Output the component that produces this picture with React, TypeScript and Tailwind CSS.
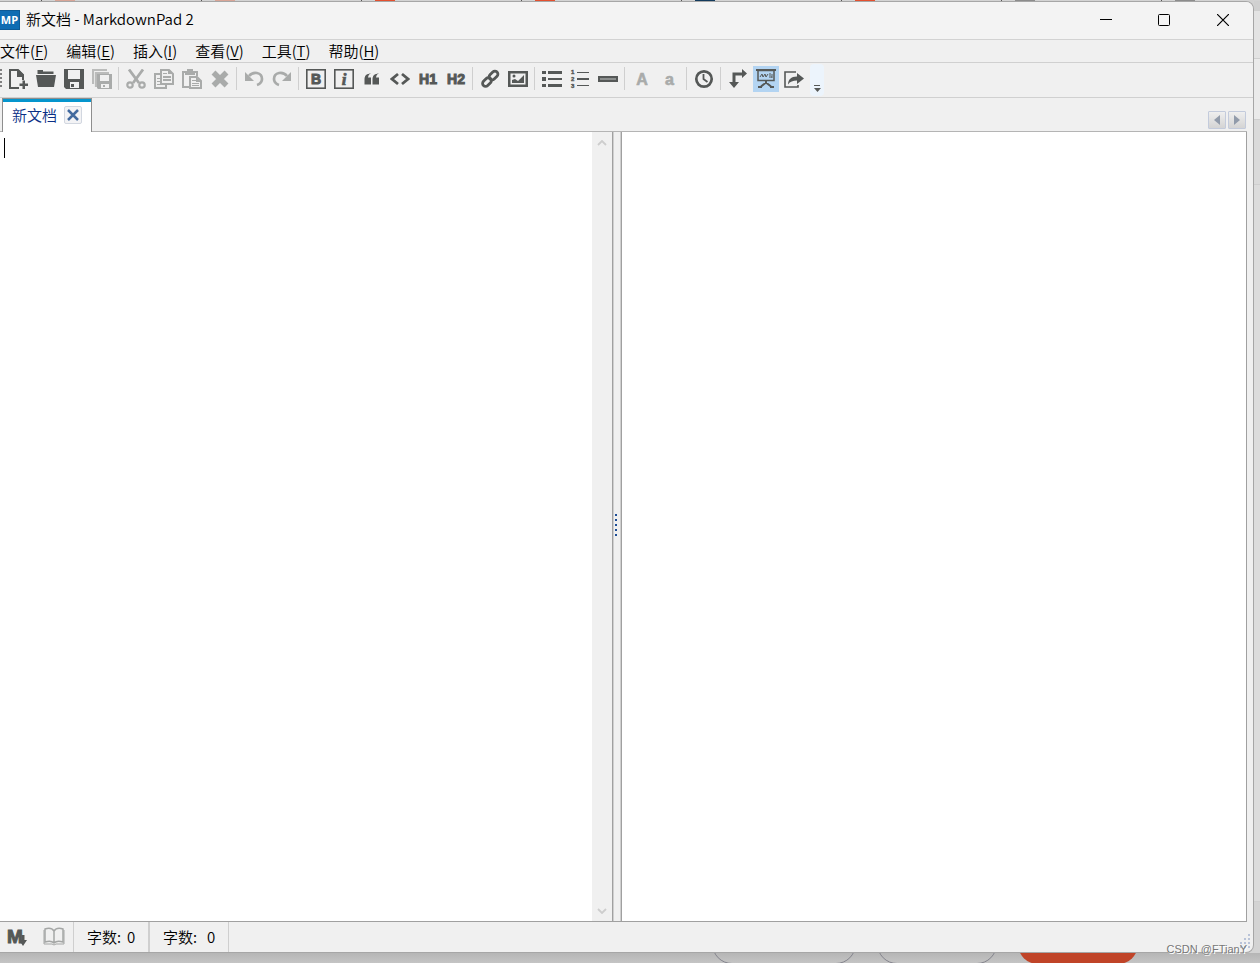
import { useState, type ReactNode } from 'react'
import { clsx } from 'clsx'

type Tool = {
  label: string
  icon: ReactNode
  disabled?: boolean
  active?: boolean
}

const Glyph = ({ children }: { children: ReactNode }) => (
  <svg width="20" height="20" viewBox="0 0 20 20" fill="currentColor" aria-hidden="true">
    {children}
  </svg>
)

const letter = { fontFamily: 'Liberation Sans', fontWeight: 700 }

// Toolbar groups, a separator is drawn between two groups
const groups: Tool[][] = [
  [
    {
      label: '新建',
      icon: (
        <Glyph>
          <path d="M11 19H2V1h8l5 5v5" fill="none" stroke="currentColor" strokeWidth="2" />
          <path d="M9 1h2l5 5v2H9z" />
          <path d="M14.500 11.500h2.500v3h3v2.500h-3v3h-2.500v-3h-3v-2.500h3z" />
        </Glyph>
      ),
    },
    {
      label: '打开',
      icon: (
        <Glyph>
          <path d="M1.500 1h5.500v1.500h10.500v2.500h-16zM0 6h20l-2 12H2z" />
        </Glyph>
      ),
    },
    {
      label: '保存',
      icon: (
        <Glyph>
          <path fillRule="evenodd" d="M0 0h20v20H2l-2-2zM4 1v9h12V1zM6 13v6h9v-6zM7 15h3v3H7z" />
        </Glyph>
      ),
    },
    {
      label: '全部保存',
      disabled: true,
      icon: (
        <Glyph>
          <path d="M1 15V1h14M4 18V4h13" fill="none" stroke="currentColor" strokeWidth="2.200" opacity="0.75" />
          <path fillRule="evenodd" d="M5 5h15v15H6l-1-1zM8 6v6h9V6zM9 15v4h8v-4zM11 16h2v2h-2z" />
        </Glyph>
      ),
    },
  ],
  [
    {
      label: '剪切',
      disabled: true,
      icon: (
        <Glyph>
          <g fill="none" stroke="currentColor">
            <path d="M3 0.500l10 13.500M17 0.500L7 14" strokeWidth="2.800" />
            <circle cx="4" cy="16" r="2.700" strokeWidth="2.200" />
            <circle cx="16" cy="16" r="2.700" strokeWidth="2.200" />
          </g>
        </Glyph>
      ),
    },
    {
      label: '复制',
      disabled: true,
      icon: (
        <Glyph>
          <g fill="none" stroke="currentColor" strokeWidth="2">
            <path d="M7 5H1v14h11v-4" />
            <path d="M7 1h8l4 4v10H7z" />
          </g>
          <path d="M9 4h4v1H9zM9 7h8v2H9zM9 10h8v2H9zM3 9h3v1H3zM3 12h3v1H3zM3 15h7v1H3zM14 1h2l3 4h-5z" />
        </Glyph>
      ),
    },
    {
      label: '粘贴',
      disabled: true,
      icon: (
        <Glyph>
          <path d="M8 18H1V3h14v4" fill="none" stroke="currentColor" strokeWidth="2" />
          <path d="M5 0h6v2h2v4H3V2h2z" />
          <path d="M8 8h7l4 4v7H8z" fill="#f0f0f0" stroke="currentColor" strokeWidth="2" />
          <path d="M10 11h4v1h-4zM10 14h7v1h-7zM10 16h7v1h-7zM14 8l5 5h-5z" />
        </Glyph>
      ),
    },
    {
      label: '删除',
      disabled: true,
      icon: (
        <Glyph>
          <path d="M3.500 3.500l13 13M16.500 3.500l-13 13" fill="none" stroke="currentColor" strokeWidth="5.500" />
        </Glyph>
      ),
    },
  ],
  [
    {
      label: '撤销',
      disabled: true,
      icon: (
        <Glyph>
          <path d="M5 7c4-5 13-4 13 3 0 3-2 5-5 6" fill="none" stroke="currentColor" strokeWidth="2.700" />
          <path d="M1 3v9h9z" />
        </Glyph>
      ),
    },
    {
      label: '重做',
      disabled: true,
      icon: (
        <Glyph>
          <path d="M15 7C11 2 2 3 2 10c0 3 2 5 5 6" fill="none" stroke="currentColor" strokeWidth="2.700" />
          <path d="M19 3v9h-9z" />
        </Glyph>
      ),
    },
  ],
  [
    {
      label: '粗体',
      icon: (
        <Glyph>
          <rect x="0.800" y="0.800" width="18.400" height="18.400" fill="none" stroke="currentColor" strokeWidth="1.600" />
          <text x="10" y="15" textAnchor="middle" fontSize="14" stroke="currentColor" style={letter}>B</text>
        </Glyph>
      ),
    },
    {
      label: '斜体',
      icon: (
        <Glyph>
          <rect x="0.800" y="0.800" width="18.400" height="18.400" fill="none" stroke="currentColor" strokeWidth="1.600" />
          <text x="10" y="15.500" textAnchor="middle" fontSize="17" fontFamily="Liberation Serif" fontWeight="700" fontStyle="italic" stroke="currentColor" strokeWidth="0.700">i</text>
        </Glyph>
      ),
    },
    {
      label: '引用',
      icon: (
        <Glyph>
          <path d="M9.500 4.500c-2 0-3 1.500-3.500 4h3v7H2.500v-5c0-4 2-6 7-6zM17.500 4.500c-2 0-3 1.500-3.500 4h3v7h-6.500v-5c0-4 2-6 7-6z" />
        </Glyph>
      ),
    },
    {
      label: '代码',
      icon: (
        <Glyph>
          <path d="M8 5l-6 5 6 5M12 5l6 5-6 5" fill="none" stroke="currentColor" strokeWidth="2.800" />
        </Glyph>
      ),
    },
    {
      label: '标题 1',
      icon: (
        <Glyph>
          <text x="10" y="15" textAnchor="middle" fontSize="14" stroke="currentColor" style={letter}>H1</text>
        </Glyph>
      ),
    },
    {
      label: '标题 2',
      icon: (
        <Glyph>
          <text x="10" y="15" textAnchor="middle" fontSize="14" stroke="currentColor" style={letter}>H2</text>
        </Glyph>
      ),
    },
  ],
  [
    {
      label: '链接',
      icon: (
        <Glyph>
          <g fill="none" stroke="currentColor" strokeWidth="2.800">
            <rect x="-5" y="-3" width="10" height="6" rx="3" transform="translate(13.5 6.5) rotate(-45)" />
            <rect x="-5" y="-3" width="10" height="6" rx="3" transform="translate(7 13) rotate(-45)" />
          </g>
        </Glyph>
      ),
    },
    {
      label: '图片',
      icon: (
        <Glyph>
          <path fillRule="evenodd" d="M0 2h20v16H0zM2.500 4.500v11h15v-11z" />
          <circle cx="6" cy="7" r="1.500" />
          <path d="M4 14v-3l3-1 3 2 6-6v8z" />
        </Glyph>
      ),
    },
  ],
  [
    {
      label: '无序列表',
      icon: (
        <Glyph>
          <path d="M0 2h4v3H0zM6 2h14v3H6zM0 8h4v4H0zM6 9h14v2H6zM0 15h4v3H0zM6 15h14v3H6z" />
        </Glyph>
      ),
    },
    {
      label: '有序列表',
      icon: (
        <Glyph>
          <path d="M7 3h12v1H7zM7 9h12v2H7zM7 16h12v1H7z" />
          <g fontSize="6" stroke="currentColor" strokeWidth="0.400" style={letter}>
            <text x="1" y="5">1</text>
            <text x="1" y="12">2</text>
            <text x="1" y="19">3</text>
          </g>
        </Glyph>
      ),
    },
    {
      label: '水平线',
      icon: (
        <Glyph>
          <path d="M0 7h20v6H0z" />
          <path d="M2 9h16v2H2z" fill="#8c8f8e" />
        </Glyph>
      ),
    },
  ],
  [
    {
      label: '大写',
      disabled: true,
      icon: (
        <Glyph>
          <text x="10" y="16" textAnchor="middle" fontSize="16" stroke="currentColor" strokeWidth="0.600" style={letter}>A</text>
        </Glyph>
      ),
    },
    {
      label: '小写',
      disabled: true,
      icon: (
        <Glyph>
          <text x="9.500" y="16" textAnchor="middle" fontSize="16" stroke="currentColor" strokeWidth="0.600" style={letter}>a</text>
        </Glyph>
      ),
    },
  ],
  [
    {
      label: '时间戳',
      icon: (
        <Glyph>
          <g fill="none" stroke="currentColor">
            <circle cx="10" cy="10" r="7.700" strokeWidth="2.700" />
            <path d="M9.500 5v5l4 3" strokeWidth="1.800" />
          </g>
        </Glyph>
      ),
    },
  ],
  [
    {
      label: '水平布局',
      icon: (
        <Glyph>
          <path d="M6 13V5h8" fill="none" stroke="currentColor" strokeWidth="3" />
          <path d="M1 13h10l-5 6zM14 0v9l5-4.500z" />
        </Glyph>
      ),
    },
    {
      label: '实时预览',
      active: true,
      icon: (
        <Glyph>
          <g fill="none" stroke="currentColor">
            <rect x="2" y="1.500" width="16" height="10" strokeWidth="1.500" />
            <path d="M4 8l2-3 1 3 2-3 1 3 2-3M13 8h3M14 4v3M16 5v4" />
            <path d="M10 11v4M10 13.500l-5 4M10 13.500l5 4M2 18h4M14 18h4" strokeWidth="2" />
          </g>
          <path d="M0 0h20v2H0z" />
        </Glyph>
      ),
    },
    {
      label: '导出',
      icon: (
        <Glyph>
          <path d="M12 3H1v15h13v-2" fill="none" stroke="currentColor" strokeWidth="1.600" />
          <path d="M13 4l7 5.500-7 5.500v-3.500c-4 0-7 1-9 4 0-5 3-8 9-8z" />
        </Glyph>
      ),
    },
  ],
]

const menus = [
  ['文件', 'F'],
  ['编辑', 'E'],
  ['插入', 'I'],
  ['查看', 'V'],
  ['工具', 'T'],
  ['帮助', 'H'],
]

const tabColors = ['bg-[#d9a596]', 'bg-[#d9a596]', 'bg-[#e4502f]', 'bg-[#e4502f]', 'bg-[#123a5c]', 'bg-[#e4502f]', 'bg-[#8c8c8c]', 'bg-[#8c8c8c]']

function TitleBar() {
  return (
    <header className="flex h-[38px] shrink-0 items-center border-b border-[#d2d2d2] bg-[#f3f3f3] pb-[2px]">
      <span className="flex size-5 items-center justify-center border border-l-0 border-[#0d5a96] bg-[#0f6cb3] font-['Open_Sans',sans-serif] text-[11px] font-bold leading-4 text-white">MP</span>
      <h1 className="ml-[6px] flex-1 pb-px text-[15px] leading-5">新文档 - MarkdownPad 2</h1>
      <div className="flex">
        <button aria-label="最小化" className="flex h-9 w-[58px] items-center justify-center">
          <svg width="12" height="12" viewBox="0 0 12 12" stroke="#000"><path d="M0 5.500h12" /></svg>
        </button>
        <button aria-label="最大化" className="flex h-9 w-[58px] items-center justify-center">
          <svg width="12" height="12" viewBox="0 0 12 12" fill="none" stroke="#000"><rect x="0.500" y="0.500" width="11" height="11" rx="1" /></svg>
        </button>
        <button aria-label="关闭" className="flex h-9 w-[60px] items-center justify-center">
          <svg width="12" height="12" viewBox="0 0 12 12" stroke="#000" strokeWidth="1.200"><path d="M0 0l12 12M12 0L0 12" /></svg>
        </button>
      </div>
    </header>
  )
}

function ToolBar() {
  return (
    <div role="toolbar" className="flex h-[35px] shrink-0 items-start overflow-hidden border-b border-[#d0d0d0]">
      <div className="mr-[1px] mt-1 flex w-[3px] flex-col gap-[2px] pt-[2px]">
        {[0, 1, 2, 3, 4].map((i) => (
          <span key={i} className="h-[2px] w-[2px] bg-[#808080]" />
        ))}
      </div>
      {groups.map((group, gi) => (
        <div key={gi} className="flex">
          {gi > 0 && <span className="ml-[2px] mr-[3px] mt-1 h-[23px] w-px bg-[#cfcfcf]" />}
          {group.map((tool) => (
            <button
              key={tool.label}
              aria-label={tool.label}
              disabled={tool.disabled}
              className={clsx(
                'mt-[2px] flex size-7 items-center justify-center border border-[#f0f0f0]',
                tool.disabled ? 'text-[#a9abaa]' : 'text-[#555857]',
                tool.active && 'bg-[#b3d4f2]'
              )}
            >
              {tool.icon}
            </button>
          ))}
        </div>
      ))}
      <button aria-label="更多" className="ml-[2px] mt-[1px] flex h-8 w-[14px] items-end justify-center rounded-sm bg-[#ecf4fc] pb-[3px]">
        <svg width="8" height="8" viewBox="0 0 8 8" fill="#555857"><path d="M1 0h6v1H1zM1 3h7L4.500 7z" /></svg>
      </button>
    </div>
  )
}

function TabStrip() {
  const arrow = 'flex size-[18px] items-center justify-center rounded-[1px] border border-[#c3cbdc] bg-linear-to-b from-[#efefef] to-[#d4d4d4]'
  return (
    <div className="flex h-[34px] shrink-0 items-end">
      <div className="h-full w-[2px] border-b border-[#b4b4b4]" />
      <div className="flex h-full w-[90px] items-center gap-[7px] border-x border-t border-[#8e8e8e] bg-white pb-[2px] pl-[9px] shadow-[inset_0_3px_0_#0595cd]">
        <button className="text-[15px] leading-5 text-[#0a2f85]">新文档</button>
        <button aria-label="关闭标签" className="flex size-[18px] items-center justify-center rounded-[2px] border border-[#d2d7e0] bg-[#f3f3f5]">
          <svg width="12" height="12" viewBox="0 0 12 12" stroke="#426a9f" strokeWidth="2.500"><path d="M1 1l10 10M11 1L1 11" /></svg>
        </button>
      </div>
      <div className="flex h-full flex-1 items-end justify-end gap-[2px] border-b border-[#b4b4b4] pb-[2px] pr-px">
        <button aria-label="上一个" className={arrow}>
          <svg width="8" height="10" viewBox="0 0 8 10" fill="#919baa"><path d="M7 0v10L1 5z" /></svg>
        </button>
        <button aria-label="下一个" className={arrow}>
          <svg width="8" height="10" viewBox="0 0 8 10" fill="#919baa"><path d="M1 0v10l6-5z" /></svg>
        </button>
      </div>
    </div>
  )
}

function Workspace({ text, onChange }: { text: string; onChange: (v: string) => void }) {
  return (
    <div className="flex min-h-0 flex-1 border-r border-[#a0a0a0] bg-white">
      <div className="flex shrink basis-[49.2%] border-r border-[#a0a0a0]">
        <div className="relative flex-1">
          <textarea
            aria-label="编辑区"
            value={text}
            onChange={(e) => onChange(e.target.value)}
            className="block size-full resize-none px-1 py-[6px] text-[15px] leading-5 caret-transparent outline-none"
          />
          {text === '' && <span className="pointer-events-none absolute left-1 top-[6px] h-5 w-px bg-black" />}
        </div>
        <div className="flex w-5 flex-col items-center justify-between bg-[#f0f0f0] pb-[7px] pt-2">
          <button aria-label="向上滚动" className="block">
            <svg className="block" width="10" height="6" viewBox="0 0 10 6" fill="none" stroke="#cdcdcd" strokeWidth="1.800"><path d="M1 5l4-4 4 4" /></svg>
          </button>
          <button aria-label="向下滚动" className="block">
            <svg className="block" width="10" height="6" viewBox="0 0 10 6" fill="none" stroke="#cdcdcd" strokeWidth="1.800"><path d="M1 1l4 4 4-4" /></svg>
          </button>
        </div>
      </div>
      <div role="separator" className="flex w-2 flex-col items-center justify-center gap-[3px] border-x border-[#cfcfcf] bg-[#f0f0f0] pb-1 pr-[2px]">
        {[0, 1, 2, 3, 4].map((i) => (
          <span key={i} className="size-[2px] bg-[#1f4e96]" />
        ))}
      </div>
      <section aria-label="预览" className="min-w-0 flex-1 whitespace-pre-wrap border-l border-[#a0a0a0] p-2 text-[15px]">
        {text}
      </section>
    </div>
  )
}

function StatusBar({ text }: { text: string }) {
  const words = text.split(/\s+/).filter(Boolean).length
  return (
    <footer className="relative flex h-[30px] shrink-0 items-stretch text-[15px] leading-[30px]">
      <div className="flex w-[74px] items-center gap-4 border-r border-[#cfcfcf] pl-[7px]">
        <button aria-label="Markdown" className="text-[#555857]">
          <Glyph>
            <text x="0" y="16" fontSize="19" stroke="currentColor" style={letter}>M</text>
            <path d="M14.500 8h3v5h2.500l-4 6-4-6h2.500z" />
          </Glyph>
        </button>
        <button aria-label="词典" className="text-[#a4a6a5]">
          <svg width="22" height="20" viewBox="0 0 22 20" fill="none" stroke="currentColor" strokeWidth="1.500">
            <path d="M11 4C9 1 5 1 2 2v13c3-1 7-1 9 1 2-2 6-2 9-1V2c-3-1-7-1-9 2v12" />
            <path d="M1 3v14h8l2 1 2-1h8V3" strokeWidth="1" />
          </svg>
        </button>
      </div>
      <div className="flex w-[76px] gap-[6px] border-r-2 border-[#cfcfcf] pl-[13px]">
        <span>字数:</span>
        <span>{words}</span>
      </div>
      <div className="flex w-[79px] gap-[10px] border-r border-[#cfcfcf] pl-[13px]">
        <span>字数:</span>
        <span>{text.length}</span>
      </div>
      <svg className="absolute bottom-1 right-[2px]" width="12" height="14" viewBox="0 0 12 14" fill="#b9c3d8" aria-hidden="true">
        <path d="M9 0h2v2H9zM9 4h2v2H9zM5 4h2v2H5zM9 8h2v2H9zM5 8h2v2H5zM1 8h2v2H1zM9 12h2v2H9zM5 12h2v2H5zM1 12h2v2H1z" />
      </svg>
    </footer>
  )
}

export default function App() {
  const [text, setText] = useState('')

  return (
    <div className="relative flex h-screen flex-col overflow-hidden bg-[#d3d3d3] font-['Noto_Sans_CJK_SC',sans-serif] font-[350] text-black">
      {/* Browser tabs peeking out behind the window */}
      <div className="flex h-px shrink-0 gap-[140px] pl-[41px]">
        {tabColors.map((color, i) => (
          <span key={i} className="flex w-5 shrink-0 gap-[13px]">
            <span className="w-px shrink-0 bg-[#555]" />
            <span className={clsx('w-5 shrink-0', color)} />
          </span>
        ))}
      </div>
      <div className="flex min-h-0 flex-1">
        <main className="flex min-w-0 flex-1 flex-col overflow-hidden rounded-r-lg border-y border-r border-[#a6a6a6] bg-[#f0f0f0]">
          <TitleBar />
          <nav className="flex h-[23px] shrink-0 items-center gap-[18px] border-b border-[#d0d0d0] text-[15px] leading-5">
            {menus.map(([name, key]) => (
              <button key={key} className="whitespace-nowrap">
                {name}(<u className="underline-offset-2">{key}</u>)
              </button>
            ))}
          </nav>
          <ToolBar />
          <div className="mr-[6px] flex min-h-0 flex-1 flex-col border-b border-[#a0a0a0]">
            <TabStrip />
            <Workspace text={text} onChange={setText} />
          </div>
          <StatusBar text={text} />
        </main>
        <div className="flex w-[6px] flex-col divide-y divide-[#cfcfcf]">
          <div className="h-[10px] bg-[#d0d0d0]" />
          <div className="h-12 bg-[#e3e3e3]" />
          <div className="h-[61px] bg-[#eaeaea]" />
          <div className="h-[65px] bg-[#dadada]" />
          <div className="flex-1 bg-[#dcdcdc]" />
          <div className="h-[51px] bg-[#d3d3d3]" />
        </div>
      </div>
      <div className="flex h-[10px] shrink-0 justify-end gap-[21px] overflow-hidden bg-linear-to-b from-[#b5b5b5] to-[#c4c4c4] pr-[122px]">
        <span className="-mt-[29px] h-10 w-[144px] rounded-full border border-[#83838c]" />
        <span className="-mt-[29px] h-10 w-[120px] rounded-full border border-[#83838c]" />
        <span className="-mt-[29px] h-10 w-[120px] rounded-full bg-[#c04428]" />
      </div>
      <span className="absolute bottom-[7px] right-[13px] font-['Liberation_Sans',sans-serif] text-[11px] font-normal leading-[14px] text-[#777] [text-shadow:1px_1px_0_#fff]">CSDN @FTianY</span>
    </div>
  )
}
